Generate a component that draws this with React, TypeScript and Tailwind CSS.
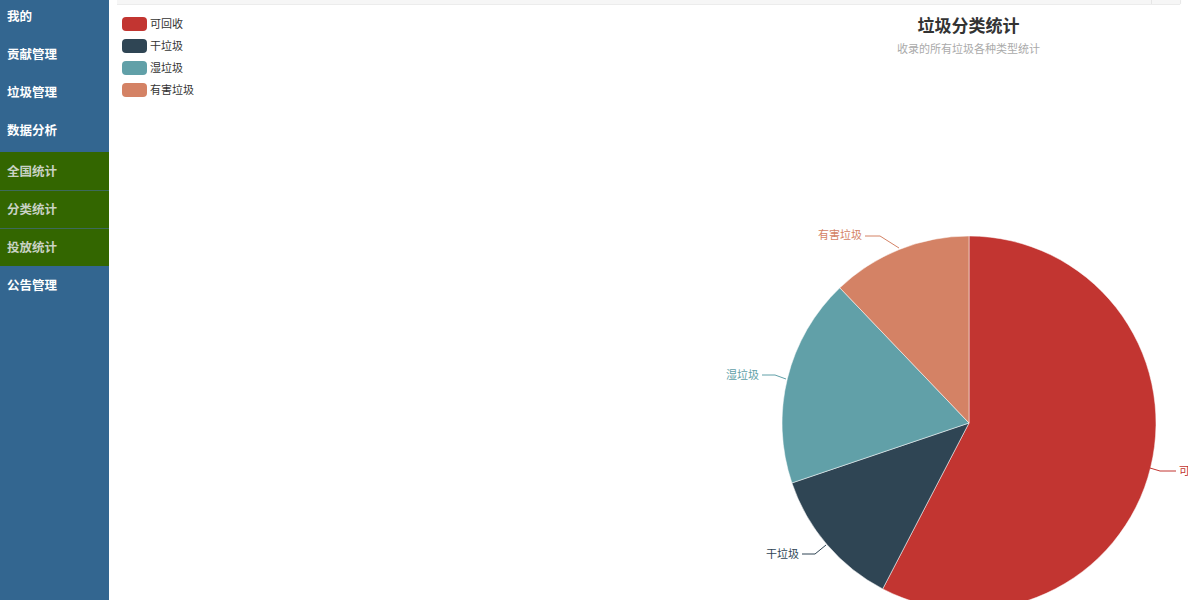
import React from 'react';

const menu = ['我的', '贡献管理', '垃圾管理', '数据分析'];
const subMenu = ['全国统计', '分类统计', '投放统计'];

const legend = [
  { label: '可回收', color: '#c23531' },
  { label: '干垃圾', color: '#2f4554' },
  { label: '湿垃圾', color: '#61a0a8' },
  { label: '有害垃圾', color: '#d48265' },
];

const cjk = '"Noto Sans CJK SC", "Microsoft YaHei", sans-serif';

function PieChart() {
  return (
    <svg width="1071" height="595" className="block" style={{ fontFamily: cjk }}>
      {/* legend */}
      {legend.map((l, i) => (
        <g key={l.label}>
          <rect x="5" y={12 + i * 22} width="25" height="14" rx="4" fill={l.color} />
          <text x="33" y={23 + i * 22} fontSize="11" fill="#333">{l.label}</text>
        </g>
      ))}

      {/* title */}
      <text x="851.5" y="26.5" textAnchor="middle" fontSize="17" fontWeight="bold" fill="#333">垃圾分类统计</text>
      <text x="851.5" y="48" textAnchor="middle" fontSize="11" fill="#aaa">收录的所有垃圾各种类型统计</text>

      {/* slices */}
      <g stroke="#fff" strokeWidth="0.5">
        <path d="M852 418 L852 231 A187 187 0 1 1 765.7 583.9 Z" fill="#c23531" />
        <path d="M852 418 L765.7 583.9 A187 187 0 0 1 674.9 477.95 Z" fill="#2f4554" />
        <path d="M852 418 L674.9 477.95 A187 187 0 0 1 722.8 282.8 Z" fill="#61a0a8" />
        <path d="M852 418 L722.8 282.8 A187 187 0 0 1 852 231 Z" fill="#d48265" />
      </g>

      {/* label lines */}
      <g fill="none" strokeWidth="1">
        <polyline points="782,243 763,231 748,231" stroke="#d48265" />
        <polyline points="669,374 658,370 645,370" stroke="#61a0a8" />
        <polyline points="709,540 698,549 685,549" stroke="#2f4554" />
        <polyline points="1033,463 1043,466 1059,466" stroke="#c23531" />
      </g>
      <text x="745" y="234" textAnchor="end" fontSize="11" fill="#d48265">有害垃圾</text>
      <text x="642" y="374" textAnchor="end" fontSize="11" fill="#61a0a8">湿垃圾</text>
      <text x="682" y="552.5" textAnchor="end" fontSize="11" fill="#2f4554">干垃圾</text>
      <text x="1062" y="470" fontSize="11" fill="#c23531">可回收</text>
    </svg>
  );
}

export default function App() {
  return (
    <div className="flex h-[600px] w-[1188px] overflow-hidden bg-white" style={{ fontFamily: cjk }}>
      {/* Sidebar */}
      <aside className="flex w-[109px] shrink-0 flex-col bg-[#336690]">
        {menu.map((m) => (
          <div key={m} className="flex h-[38px] items-center px-[7px] pb-[5px] text-[12.5px] font-bold text-white">
            {m}
          </div>
        ))}
        <div className="flex flex-col bg-[#336600]">
          {subMenu.map((s, i) => (
            <div
              key={s}
              className={`flex h-[38px] items-center px-[7px] text-[12.5px] font-bold text-[#c9d2c4] ${
                i > 0 ? 'border-t border-[#3d6a5c]' : ''
              }`}
            >
              {s}
            </div>
          ))}
        </div>
        <div className="flex h-[38px] items-center px-[7px] text-[12.5px] font-bold text-white">公告管理</div>
      </aside>

      {/* Main */}
      <main className="flex min-w-0 flex-1 flex-col pl-[8px]">
        <div className="flex h-[5px] w-[1063px] shrink-0 border-b border-[#ececec] bg-[#f6f6f6]">
          <div className="flex-1" />
          <div className="w-[29px] border-l border-[#e6e6e6] shadow-[1px_0_1px_#e6e6e6]" />
        </div>
        <PieChart />
      </main>
    </div>
  );
}
